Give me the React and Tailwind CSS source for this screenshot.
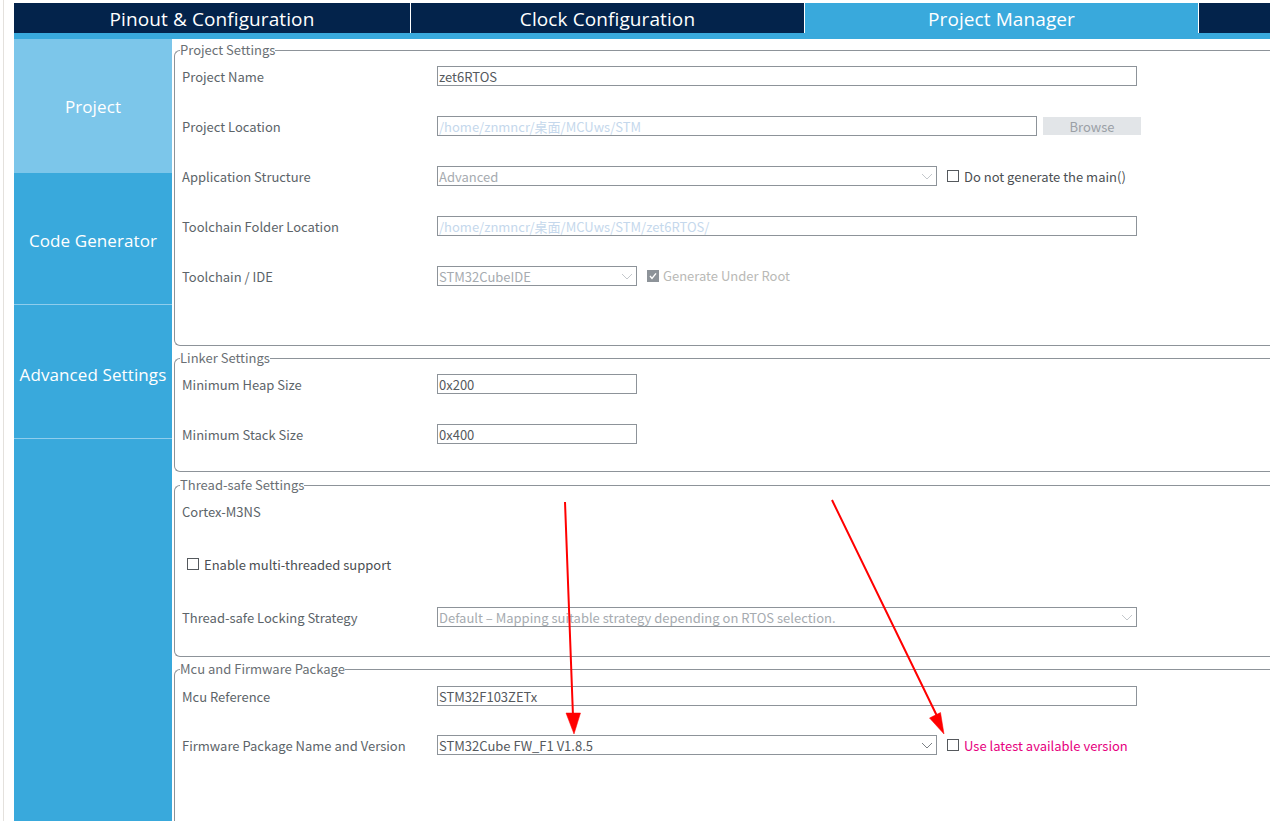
const bodyFont = "font-['Noto_Sans_CJK_SC','Noto_Sans',sans-serif]"

function Chevron({ className = 'text-[#c4c8cc]' }) {
  return (
    <svg width="12" height="7" viewBox="0 0 12 7" fill="none" stroke="currentColor" strokeWidth="1" className={className}>
      <path d="M1 1l5 5 5-5" />
    </svg>
  )
}

function Box({ checked = false }) {
  if (checked) {
    return (
      <span className="flex h-3 w-3 shrink-0 items-center justify-center bg-[#8d9399]">
        <svg width="10" height="10" viewBox="0 0 10 10" fill="none" stroke="#fff" strokeWidth="1.4">
          <path d="M2 5l2 2.4 4-5" />
        </svg>
      </span>
    )
  }
  return <span className="h-3 w-3 shrink-0 border border-[#55595d] bg-white" />
}

function Check({ label, checked, className = 'text-[#4b4f53] pt-[2px]' }) {
  return (
    <div className={`flex items-center ${checked ? 'gap-[4px]' : 'gap-[5px]'}`}>
      <Box checked={checked} />
      <span className={`text-[13px] leading-[18px] whitespace-nowrap ${className}`}>{label}</span>
    </div>
  )
}

function Field({ value, width, tone = 'text-[#55595d]', select, chevron }) {
  return (
    <div className={`flex h-5 items-center justify-between border border-[#8d9399] pr-[3px] pl-[1px] ${width}`}>
      <span className={`pt-[2px] text-[13px] leading-[18px] whitespace-nowrap ${tone}`}>{value}</span>
      {select && <Chevron className={chevron} />}
    </div>
  )
}

function Row({ label, children }) {
  return (
    <div className="flex h-5 items-center">
      <span className="w-[255px] shrink-0 pt-[2px] text-[13px] leading-[18px] text-[#5c6469]">{label}</span>
      {children}
    </div>
  )
}

function Group({ title, height, pad = 'pt-[7px]', gap = 'gap-[30px]', children }) {
  return (
    <fieldset className={`rounded-l-md border border-r-0 border-[#8d9399] pl-[7px] ${height}`}>
      <legend className="ml-[-2px] text-[13px] leading-[18px] text-[#6a6f74]">{title}</legend>
      <div className={`flex flex-col ${pad} ${gap}`}>{children}</div>
    </fieldset>
  )
}

function Arrows() {
  return (
    <svg className="absolute inset-0" width="1270" height="821" fill="#ff0000" stroke="#ff0000">
      <path d="M565 502L573 716M832 500L937 716" strokeWidth="2" fill="none" />
      <path d="M566 713L580.5 713L574 734Z" strokeWidth="0.5" />
      <path d="M929.5 718L940.5 712.5L944 734Z" strokeWidth="0.5" />
    </svg>
  )
}

const tabs = [
  { name: 'Pinout & Configuration', w: 'w-[397px]' },
  { name: 'Clock Configuration', w: 'w-[394px]' },
  { name: 'Project Manager', w: 'w-[394px]', active: true },
]

export default function App() {
  return (
    <div className={`relative h-[821px] w-[1270px] overflow-hidden bg-white pt-[3px] pl-[3px] ${bodyFont}`}>
      <div className="absolute top-0 bottom-0 left-[3px] w-px bg-[#e4e1dd]" />
      <div className="ml-[11px] flex h-[36px] items-start bg-[#39a9dc]">
        {tabs.map((t) => (
          <div
            key={t.name}
            className={`flex h-[30px] items-center justify-center border-r border-white pt-[2px] text-[19px] tracking-[0.1px] text-white font-['Open_Sans',sans-serif] ${t.w} ${t.active ? 'bg-[#39a9dc]' : 'bg-[#03234b]'}`}
          >
            {t.name}
          </div>
        ))}
        <div className="h-[30px] flex-1 bg-[#03234b]" />
      </div>

      <div className="ml-[11px] flex">
        <div className="h-[782px] w-[158px] shrink-0 bg-[#39a9dc] text-center text-[17px] tracking-[0.1px] text-white font-['Open_Sans',sans-serif]">
          <div className="flex h-[134px] items-center justify-center bg-[#7cc6ea] pt-[2px]">Project</div>
          <div className="flex h-[132px] items-center justify-center border-b border-[#8fcdec] pt-[5px]">Code Generator</div>
          <div className="flex h-[134px] items-center justify-center border-b border-[#8fcdec] pt-[6px]">Advanced Settings</div>
        </div>

        <div className="ml-[2px] flex flex-1 flex-col pt-[2px]">
          <Group title="Project Settings" height="h-[305px]">
            <Row label="Project Name">
              <Field value="zet6RTOS" width="w-[700px]" />
            </Row>
            <Row label="Project Location">
              <Field value="/home/znmncr/桌面/MCUws/STM" width="w-[600px]" tone="text-[#c5d8ec]" />
              <div className="ml-[6px] flex h-[18px] w-[98px] items-center justify-center bg-[#e2e5e8] pt-[2px] text-[13px] text-[#9aa0a6]">Browse</div>
            </Row>
            <Row label="Application Structure">
              <Field value="Advanced" width="w-[500px]" tone="text-[#a6abb0]" select />
              <div className="ml-[10px]">
                <Check label="Do not generate the main()" />
              </div>
            </Row>
            <Row label="Toolchain Folder Location">
              <Field value="/home/znmncr/桌面/MCUws/STM/zet6RTOS/" width="w-[700px]" tone="text-[#c5d8ec]" />
            </Row>
            <Row label="Toolchain / IDE">
              <Field value="STM32CubeIDE" width="w-[200px]" tone="text-[#a6abb0]" select />
              <div className="ml-[10px]">
                <Check label="Generate Under Root" checked className="text-[#b9b9b6]" />
              </div>
            </Row>
          </Group>

          <div className="mt-[3px] mb-[4px]">
            <Group title="Linker Settings" height="h-[123px]">
              <Row label="Minimum Heap Size">
                <Field value="0x200" width="w-[200px]" />
              </Row>
              <Row label="Minimum Stack Size">
                <Field value="0x400" width="w-[200px]" />
              </Row>
            </Group>
          </div>

          <Group title="Thread-safe Settings" height="h-[181px]" gap="gap-0">
            <Row label="Cortex-M3NS" />
            <div className="mt-[33px] ml-[5px]">
              <Check label="Enable multi-threaded support" />
            </div>
            <div className="mt-[33px]">
              <Row label="Thread-safe Locking Strategy">
                <Field value="Default – Mapping suitable strategy depending on RTOS selection." width="w-[700px]" tone="text-[#a6abb0]" select />
              </Row>
            </div>
          </Group>

          <div className="mt-[3px]">
            <Group title="Mcu and Firmware Package" height="h-[200px]" pad="pt-2" gap="gap-[29px]">
              <Row label="Mcu Reference">
                <Field value="STM32F103ZETx" width="w-[700px]" />
              </Row>
              <Row label="Firmware Package Name and Version">
                <Field value="STM32Cube FW_F1 V1.8.5" width="w-[500px]" select chevron="text-[#7b8085]" />
                <div className="ml-[10px]">
                  <Check label="Use latest available version" className="pt-[2px] text-[#e6007e]" />
                </div>
              </Row>
            </Group>
          </div>
        </div>
      </div>

      <Arrows />
    </div>
  )
}
